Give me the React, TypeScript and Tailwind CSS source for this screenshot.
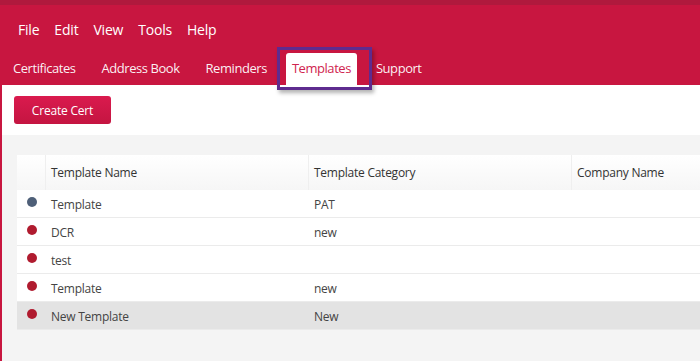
import React from 'react';

const menu = ['File', 'Edit', 'View', 'Tools', 'Help'];
const tabs = ['Certificates', 'Address Book', 'Reminders', 'Templates', 'Support'];

const rows = [
  { name: 'Template', category: 'PAT', dot: 'bg-[#4e5f78]' },
  { name: 'DCR', category: 'new', dot: 'bg-[#b01b2f]' },
  { name: 'test', category: '', dot: 'bg-[#b01b2f]' },
  { name: 'Template', category: 'new', dot: 'bg-[#b01b2f]' },
  { name: 'New Template', category: 'New', dot: 'bg-[#b01b2f]', selected: true },
];

export default function App() {
  return (
    <div className="w-[700px] h-[361px] overflow-hidden bg-[#f4f4f4] font-['Open_Sans','Noto_Sans',sans-serif] flex flex-col">
      <header className="bg-[#c81640] border-t-[5px] border-[#b0193d] shrink-0">
        <nav className="h-[48px] flex items-center pl-[18px] gap-[15px] text-[14px] text-white font-medium tracking-[-0.2px]">
          {menu.map((m) => (
            <span key={m}>{m}</span>
          ))}
        </nav>
        <div className="h-[32px] flex items-end pl-[6px] gap-[12px] text-[13px] tracking-[-0.45px]">
          {tabs.map((t) =>
            t === 'Templates' ? (
              <div key={t} className="relative h-[32px] px-[6px] flex items-center bg-white rounded-t-[3px] text-[#d0244f]">
                {t}
                <span className="absolute left-[-9px] right-[-15px] top-[-6px] bottom-[-5px] border-[3px] border-[#5e2b8f] shadow-[2px_3px_4px_rgba(0,0,0,0.3)]" />
              </div>
            ) : (
              <div key={t} className="h-[32px] px-[7px] flex items-center text-white/95">
                {t}
              </div>
            )
          )}
        </div>
      </header>

      <main className="flex-1 border-l-2 border-[#c81640] flex flex-col">
        <div className="h-[50px] bg-white pl-[12px] pt-[11px] shrink-0">
          <button className="w-[97px] h-[28px] pt-[1px] rounded-[3px] bg-gradient-to-b from-[#da1a4e] to-[#c41541] text-white text-[12px] tracking-[-0.2px]">
            Create Cert
          </button>
        </div>

        <div className="flex-1 pt-[20px] pl-[15px]">
          <div className="bg-white text-[12px] tracking-[-0.25px]">
            <div className="h-[35px] flex bg-gradient-to-b from-white to-[#f6f6f6] text-[#333]">
              <div className="w-[29px] shrink-0 border-r border-[#efefef]" />
              <div className="w-[263px] shrink-0 border-r border-[#efefef] pl-[5px] flex items-center">Template Name</div>
              <div className="w-[263px] shrink-0 border-r border-[#efefef] pl-[5px] flex items-center">Template Category</div>
              <div className="flex-1 pl-[5px] flex items-center">Company Name</div>
            </div>
            {rows.map((r, i) => (
              <div
                key={i}
                className={`h-[28px] flex text-[#444] border-b border-[#ebebeb] ${r.selected ? 'bg-[#e3e3e3]' : 'bg-white'}`}
              >
                <div className="w-[29px] shrink-0 flex items-center justify-center pb-[3px]">
                  <span className={`w-[10px] h-[10px] rounded-full ${r.dot}`} />
                </div>
                <div className="w-[263px] shrink-0 pl-[5px] pt-[2px] flex items-center">{r.name}</div>
                <div className="w-[263px] shrink-0 pl-[5px] pt-[2px] flex items-center">{r.category}</div>
                <div className="flex-1" />
              </div>
            ))}
          </div>
        </div>
      </main>
    </div>
  );
}
